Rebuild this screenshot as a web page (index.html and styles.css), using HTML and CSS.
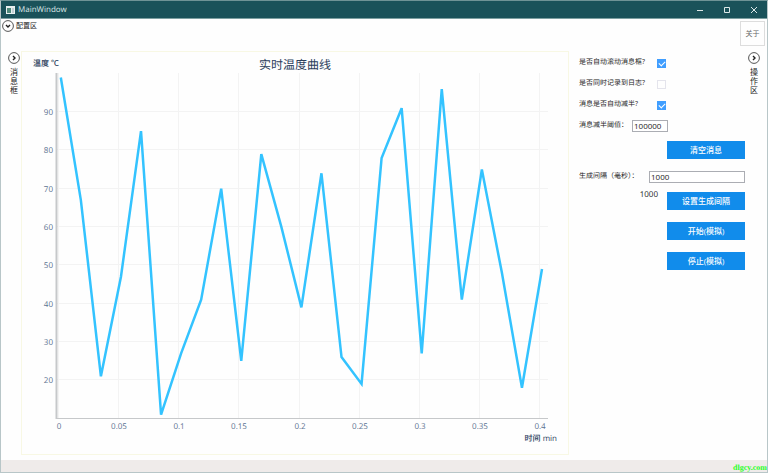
FILE: index.html
```html
<!DOCTYPE html>
<html lang="zh-CN">
<head>
  <meta charset="UTF-8">
  <meta name="viewport" content="width=device-width, initial-scale=1.0">
  <title>MainWindow</title>
  <link rel="stylesheet" href="styles.css">
</head>
<body>

<div class="window">
  <header class="title-bar">
    <svg class="app-icon" width="9" height="8" viewBox="0 0 9 8">
      <rect x="0" y="0" width="9" height="8" fill="#e8f0f0"/>
      <rect x="1" y="2" width="4" height="5" fill="#4f8a7c"/>
      <rect x="6" y="2" width="2" height="5" fill="#c4d0d4"/>
    </svg>
    <span class="title">MainWindow</span>
    <button class="win-btn" type="button" aria-label="最小化">
      <svg width="8" height="8" viewBox="0 0 8 8"><path d="M1 4.5H7"/></svg>
    </button>
    <button class="win-btn" type="button" aria-label="最大化">
      <svg width="8" height="8" viewBox="0 0 8 8"><path d="M1.5 1.5H6.5V6.5H1.5Z"/></svg>
    </button>
    <button class="win-btn" type="button" aria-label="关闭">
      <svg width="8" height="8" viewBox="0 0 8 8"><path d="M1 1L7 7M7 1L1 7"/></svg>
    </button>
  </header>

  <div class="config-bar">
    <button class="expander" type="button">
      <svg width="12" height="12" viewBox="0 0 12 12"><circle cx="6" cy="6" r="5.4"/><path d="M4 5L6 7L8 5"/></svg>
      <span>配置区</span>
    </button>
    <button class="about-btn" type="button">关于</button>
  </div>

  <main class="content">
    <button class="expander vertical" type="button">
      <svg width="12" height="12" viewBox="0 0 12 12"><circle cx="6" cy="6" r="5.4"/><path d="M5 4L7 6L5 8"/></svg>
      <span>消息框</span>
    </button>

    <section class="chart">
      <svg id="tempChart" viewBox="0 0 546 402">
        <g id="grid"></g>
        <path class="axis-y" d="M34.5 21V367"/>
        <path class="axis-x" d="M34 366.5H526"/>
        <g id="ticks"></g>
        <polyline id="curve"/>
        <text class="chart-title" x="273" y="17">实时温度曲线</text>
        <text class="axis-title" x="11" y="14">温度 ℃</text>
        <text class="axis-title end" x="535" y="389">时间 min</text>
      </svg>
    </section>

    <form class="panel">
      <div class="row">
        <label for="autoScroll">是否自动滚动消息框?</label>
        <input type="checkbox" id="autoScroll" checked>
      </div>
      <div class="row">
        <label for="writeLog">是否同时记录到日志?</label>
        <input type="checkbox" id="writeLog">
      </div>
      <div class="row">
        <label for="autoHalve">消息是否自动减半?</label>
        <input type="checkbox" id="autoHalve" checked>
      </div>
      <div class="row threshold">
        <label for="threshold">消息减半阈值：</label>
        <input type="text" id="threshold" value="100000">
      </div>
      <div class="row action">
        <button type="button">清空消息</button>
      </div>
      <div class="row interval">
        <label for="interval">生成间隔（毫秒）：</label>
        <input type="text" id="interval" value="1000">
      </div>
      <div class="row action">
        <output class="current">1000</output>
        <button type="button">设置生成间隔</button>
      </div>
      <div class="row action">
        <button type="button">开始(模拟)</button>
      </div>
      <div class="row action">
        <button type="button">停止(模拟)</button>
      </div>
    </form>

    <button class="expander vertical" type="button">
      <svg width="12" height="12" viewBox="0 0 12 12"><circle cx="6" cy="6" r="5.4"/><path d="M5 4L7 6L5 8"/></svg>
      <span>操作区</span>
    </button>
  </main>

  <footer class="status-bar">
    <span class="watermark">dlgcy.com</span>
  </footer>
</div>

<script>
  const data = [99, 67, 21, 47, 85, 11, 27, 41, 70, 25, 79, 60, 39, 74, 26, 19, 78, 91, 27, 96, 41, 75, 48, 18, 49];
  const startMin = 0.0015;
  const stepMin = 1 / 60;

  function xPos(minutes) {
    return 37 + minutes * 1203;
  }

  function yPos(value) {
    return 60 + (90 - value) * 3.83;
  }

  function add(parent, tag, attrs, text) {
    const el = document.createElementNS('http://www.w3.org/2000/svg', tag);
    for (const key in attrs) {
      el.setAttribute(key, attrs[key]);
    }
    if (text !== undefined) {
      el.textContent = text;
    }
    document.getElementById(parent).appendChild(el);
  }

  for (let i = 0; i <= 8; i++) {
    const x = Math.round(xPos(i * 0.05));
    add('grid', 'path', { d: 'M' + (x - 0.5) + ' 21V366' });
    add('ticks', 'text', { x: x, y: 377, class: 'tick-x' }, String(i * 5 / 100));
  }

  for (let v = 20; v <= 90; v += 10) {
    const y = Math.round(yPos(v));
    add('grid', 'path', { d: 'M35 ' + (y - 0.5) + 'H526' });
    add('ticks', 'text', { x: 31, y: y + 3, class: 'tick-y' }, v);
  }

  document.getElementById('curve').setAttribute('points',
    data.map((v, i) => xPos(startMin + i * stepMin) + ',' + yPos(v)).join(' '));
</script>

</body>
</html>
```
FILE: styles.css
```css
* {
  box-sizing: border-box;
}

body {
  margin: 0;
  font-family: "Open Sans", "Noto Sans CJK SC", sans-serif;
  font-size: 7px;
  line-height: 10px;
  text-rendering: geometricPrecision;
  color: #222;
  background-color: #fefefe;
}

button {
  padding: 0;
  border: none;
  background: none;
  font: inherit;
  color: inherit;
  cursor: pointer;
}

.window {
  display: flex;
  flex-direction: column;
  min-height: 100vh;
  border: 1px solid #b8c6c8;
  border-top-color: #6f9396;
}

.title-bar {
  display: flex;
  align-items: center;
  height: 18px;
  padding-left: 5px;
  color: #dce8e8;
  background-color: #1a525a;
  border-bottom: 1px solid #7c9fa1;
}

.title {
  flex: 1;
  margin-left: 3px;
  font-size: 8px;
}

.win-btn {
  display: flex;
  align-items: center;
  justify-content: center;
  width: 27px;
  height: 16px;
}

.win-btn svg {
  fill: none;
  stroke: #dce8e8;
}

.config-bar {
  display: flex;
  justify-content: space-between;
  align-items: flex-start;
  padding-right: 2px;
}

.expander {
  display: flex;
  align-items: center;
  gap: 2px;
  padding: 1px;
}

.expander svg {
  flex: none;
  fill: none;
  stroke: #555;
}

.expander path {
  stroke: #222;
  stroke-width: 1.4;
}

.about-btn {
  width: 25px;
  height: 25px;
  margin-top: 2px;
  color: #666;
  border: 1px solid #ddd;
}

.content {
  flex: 1;
  display: flex;
  align-items: flex-start;
  padding: 5px 6px;
}

.vertical {
  flex-direction: column;
  gap: 3px;
  width: 14px;
  font-size: 8px;
  line-height: 9px;
}

.vertical span {
  width: 8px;
}

.chart {
  flex: 1;
  border: 1px solid #f8f8e4;
}

.chart svg {
  display: block;
  width: 100%;
  height: auto;
}

#grid path {
  stroke: #f3f3f3;
}

.axis-x,
.axis-y {
  stroke: #c6c8ca;
}

.axis-y {
  stroke-width: 2;
}

#curve {
  fill: none;
  stroke: #33c3ff;
  stroke-width: 2.5;
}

.tick-x,
.tick-y {
  font-size: 8px;
  fill: #5b7290;
}

.tick-x,
.chart-title {
  text-anchor: middle;
}

.tick-y,
.end {
  text-anchor: end;
}

.chart-title {
  font-size: 12px;
  fill: #2c405c;
}

.axis-title {
  font-size: 8px;
  font-weight: 500;
  fill: #2c405c;
}

.panel {
  display: flex;
  flex-direction: column;
  gap: 9px;
  width: 176px;
  margin-right: 2px;
  padding-left: 10px;
}

.row {
  display: flex;
  align-items: center;
  min-height: 12px;
}

.row:first-child {
  margin-top: 6px;
}

.row label {
  flex: none;
  width: 78px;
  line-height: 12px;
}

.row input {
  margin: 0;
}

.row input[type="checkbox"] {
  appearance: none;
  width: 9px;
  height: 9px;
  border: 1px solid #e4e4ec;
}

.row input[type="checkbox"]:checked {
  background-color: #409eff;
  border-color: #409eff;
}

.row input[type="checkbox"]:checked::before {
  content: "";
  display: block;
  width: 3px;
  height: 5px;
  margin-left: 2px;
  border: solid #fff;
  border-width: 0 1px 1px 0;
  transform: rotate(45deg);
}

.row input[type="text"] {
  height: 12px;
  padding: 0 1px 2px;
  border: 1px solid #abadb3;
  font: inherit;
  font-size: 8px;
  color: #222;
}

.row.threshold label {
  width: 53px;
}

.threshold input {
  width: 36px;
}

.row.interval label {
  width: 70px;
}

.interval input {
  flex: 1;
  min-width: 0;
}

.action {
  justify-content: flex-end;
  gap: 9px;
  margin-bottom: 3px;
}

.action button {
  width: 78px;
  height: 18px;
  font-size: 8px;
  font-weight: 500;
  color: #fff;
  background-color: #118ceb;
}

.current {
  align-self: flex-start;
  line-height: 6px;
  font-size: 8px;
}

.status-bar {
  display: flex;
  justify-content: flex-end;
  align-items: flex-end;
  height: 12px;
  background-color: #efebea;
}

.watermark {
  font-family: "Liberation Serif", serif;
  font-size: 8px;
  font-weight: bold;
  line-height: 9px;
  color: #1fff1f;
}
```
